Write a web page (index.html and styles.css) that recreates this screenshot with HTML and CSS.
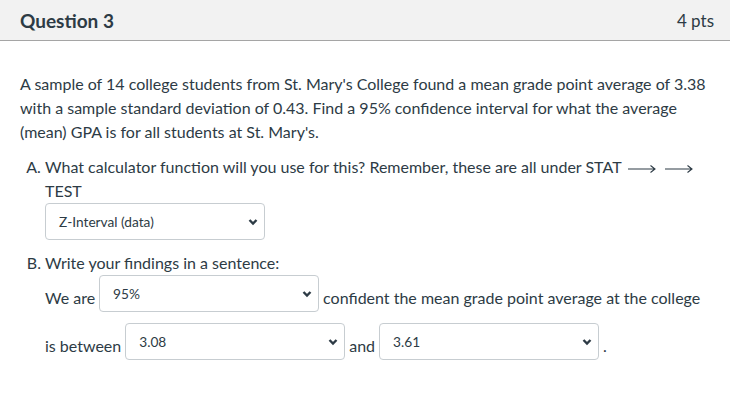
FILE: index.html
```html
<!DOCTYPE html>
<html lang="en">

<head>
    <meta charset="UTF-8">
    <meta name="viewport" content="width=device-width, initial-scale=1.0">
    <title>Question 3</title>
    <link rel="stylesheet" href="styles.css">
</head>

<body>
    <div class="question">

        <!-- Header -->
        <div class="header">
            <h2>Question 3</h2>
            <span class="pts">4 pts</span>
        </div>

        <div class="content">
            <p>A sample of 14 college students from St. Mary's College found a mean grade point average of 3.38
                with a sample standard deviation of 0.43. Find a 95% confidence interval for what the average
                (mean) GPA is for all students at St. Mary's.</p>

            <ol class="parts">
                <li>
                    What calculator function will you use for this? Remember, these are all under STAT
                    <svg class="arrow" width="28" height="10" viewBox="0 0 28 10"><path d="M0 5 H27 M22.5 1.5 L27 5 L22.5 8.5" fill="none" stroke="#2d3b45" stroke-width="1.1"/></svg>
                    <svg class="arrow" width="28" height="10" viewBox="0 0 28 10"><path d="M0 5 H27 M22.5 1.5 L27 5 L22.5 8.5" fill="none" stroke="#2d3b45" stroke-width="1.1"/></svg>
                    TEST
                    <div class="select wide">
                        <span>Z-Interval (data)</span>
                        <svg width="10" height="8" viewBox="0 0 10 8"><path d="M1.5 2 L5 5.5 L8.5 2" fill="none" stroke="#2d3b45" stroke-width="2.4"/></svg>
                    </div>
                </li>
                <li>
                    Write your findings in a sentence:
                    <div class="row">
                        <span class="label">We are</span>
                        <div class="select">
                            <span>95%</span>
                            <svg width="10" height="8" viewBox="0 0 10 8"><path d="M1.5 2 L5 5.5 L8.5 2" fill="none" stroke="#2d3b45" stroke-width="2.4"/></svg>
                        </div>
                        <span class="label">confident the mean grade point average at the college</span>
                    </div>
                    <div class="row">
                        <span class="label">is between</span>
                        <div class="select">
                            <span>3.08</span>
                            <svg width="10" height="8" viewBox="0 0 10 8"><path d="M1.5 2 L5 5.5 L8.5 2" fill="none" stroke="#2d3b45" stroke-width="2.4"/></svg>
                        </div>
                        <span class="label">and</span>
                        <div class="select">
                            <span>3.61</span>
                            <svg width="10" height="8" viewBox="0 0 10 8"><path d="M1.5 2 L5 5.5 L8.5 2" fill="none" stroke="#2d3b45" stroke-width="2.4"/></svg>
                        </div>
                        <span class="label">.</span>
                    </div>
                </li>
            </ol>
        </div>

    </div>
</body>

</html>
```

FILE: styles.css
```css
body {
    margin: 0;
    font-family: Lato, "Open Sans", sans-serif;
    color: #2d3b45;
    background: #ffffff;
}

.header {
    display: flex;
    justify-content: space-between;
    align-items: center;
    height: 40px;
    padding: 0 16px 0 20px;
    background: #f2f2f2;
    border-bottom: 1px solid #a5a5a5;
}

.header h2 {
    margin: 0;
    font-size: 19px;
    font-weight: 700;
}

.pts {
    font-size: 17px;
}

.content {
    padding: 31px 20px 20px 20px;
    font-size: 16px;
    line-height: 24px;
}

p {
    margin: 0 0 11px 0;
}

.parts {
    margin: 0;
    padding-left: 25px;
    list-style-type: upper-alpha;
}

.parts li {
    margin-bottom: 11px;
}

.arrow {
    vertical-align: -1px;
    margin: 0 2px 0 3px;
}

.select {
    display: flex;
    justify-content: space-between;
    align-items: center;
    box-sizing: border-box;
    width: 220px;
    height: 37px;
    padding: 0 6px 0 13px;
    background: #ffffff;
    border: 1px solid #c7cdd1;
    border-radius: 4px;
    font-size: 13.7px;
}

.row {
    display: flex;
    align-items: center;
    gap: 4px;
    margin-bottom: 11px;
}

.row:last-child {
    margin-bottom: 0;
}

.label {
    padding-top: 8px;
    white-space: nowrap;
}
```
